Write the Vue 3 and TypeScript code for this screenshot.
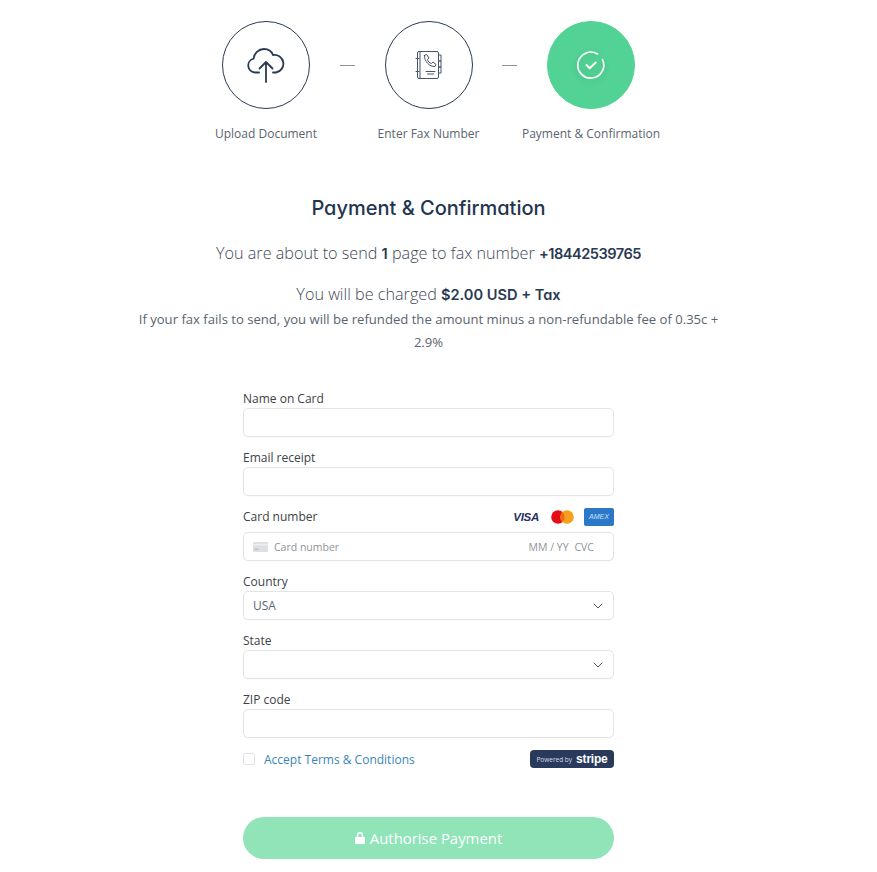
<script setup lang="ts">
type Step = { id: string; label: string; active?: boolean }

const steps: Step[] = [
  { id: 'upload', label: 'Upload Document' },
  { id: 'fax', label: 'Enter Fax Number' },
  { id: 'pay', label: 'Payment & Confirmation', active: true },
]
</script>

<template>
  <main class="page">
    <section class="steps">
      <div v-for="(s, i) in steps" :key="s.id" class="step">
        <div class="circle" :class="{ active: s.active }">
          <svg v-if="s.id === 'upload'" width="38" height="36" viewBox="0 0 38 36" fill="none" stroke="#2a3a52" stroke-width="1.8" stroke-linecap="round" stroke-linejoin="round">
            <path d="M12 25.500H8a7 7 0 0 1-1.400-13.800A10.500 10.500 0 0 1 17 2c4.200 0 7.600 2.400 9 6a8.800 8.800 0 0 1 3 17.500h-3" />
            <path d="M19 35V15M12.500 21.500l6.500-6.500 6.500 6.500" />
          </svg>
          <svg v-else-if="s.id === 'fax'" width="28" height="30" viewBox="0 0 28 30" fill="none" stroke="#46556a" stroke-width="1" stroke-linecap="round" stroke-linejoin="round">
            <rect x="2.500" y="1.500" width="21" height="27" rx="1.500" />
            <path d="M5 1.500v27M1 8.500h3M1 21.500h3" />
            <path d="M23.500 5h2.500v6h-2.500M23.500 11h2.500v6h-2.500M23.500 17h2.500v6h-2.500" />
            <path d="M9.500 5.500l2-1 2.500 3.500-1.500 1.500c.5 2 2 3.500 4 4l1.500-1.500 3 2.500-1 2c-5.500.5-11-5.500-10.500-11z" />
            <path d="M11 21.500h9M12.500 24h6" />
          </svg>
          <svg v-else width="30" height="30" viewBox="0 0 30 30" fill="none" stroke="#fff" stroke-linecap="round" stroke-linejoin="round" class="done">
            <path d="M26.500 9.500a13 13 0 1 1-5-5.500" stroke-width="1.600" />
            <path d="M10.500 15l3.200 3.200 6-5.700" stroke-width="2" />
          </svg>
        </div>
        <span class="step-label">{{ s.label }}</span>
        <i v-if="i < steps.length - 1" class="dash" />
      </div>
    </section>

    <h1 class="title">Payment &amp; Confirmation</h1>
    <p class="line first">You are about to send <b>1</b> page to fax number <b class="phone">+18442539765</b></p>
    <p class="line second">You will be charged <b>$2.00 USD + Tax</b></p>
    <p class="note">If your fax fails to send, you will be refunded the amount minus a non-refundable fee of 0.35c + 2.9%</p>

    <form class="form" @submit.prevent>
      <div class="field">
        <label>Name on Card</label>
        <div class="box"></div>
      </div>
      <div class="field">
        <label>Email receipt</label>
        <div class="box"></div>
      </div>
      <div class="field card-field">
        <div class="card-head">
          <label>Card number</label>
          <div class="brands">
            <span class="visa">VISA</span>
            <svg class="mc" width="23" height="14" viewBox="0 0 23 14">
              <circle cx="7" cy="7" r="6.800" fill="#e30d17" />
              <circle cx="16" cy="7" r="6.800" fill="#f69e1e" />
              <path d="M11.500 2a6.800 6.800 0 0 1 0 10 6.800 6.800 0 0 1 0-10z" fill="#f26a10" />
            </svg>
            <span class="amex">AMEX</span>
          </div>
        </div>
        <div class="box card-box">
          <svg width="15" height="10" viewBox="0 0 15 10">
            <rect width="15" height="10" rx="1" fill="#dcdfe3" />
            <rect y="2" width="15" height="1.500" fill="#eceef0" />
            <rect x="1.500" y="6.500" width="4" height="1.500" fill="#bfc3c8" />
          </svg>
          <span class="ph grow">Card number</span>
          <span class="ph">MM / YY</span>
          <span class="ph">CVC</span>
        </div>
      </div>
      <div class="field">
        <label>Country</label>
        <div class="box select">
          <span>USA</span>
          <svg width="10" height="6" viewBox="0 0 10 6" fill="none" stroke="#4a545e" stroke-width="1" stroke-linecap="round" stroke-linejoin="round"><path d="M1 1l4 4 4-4" /></svg>
        </div>
      </div>
      <div class="field">
        <label>State</label>
        <div class="box select">
          <span></span>
          <svg width="10" height="6" viewBox="0 0 10 6" fill="none" stroke="#4a545e" stroke-width="1" stroke-linecap="round" stroke-linejoin="round"><path d="M1 1l4 4 4-4" /></svg>
        </div>
      </div>
      <div class="field">
        <label>ZIP code</label>
        <div class="box"></div>
      </div>

      <div class="terms">
        <span class="check"></span>
        <a class="terms-link">Accept Terms &amp; Conditions</a>
        <span class="stripe"><small>Powered by</small><b>stripe</b></span>
      </div>

      <button class="pay" type="button" disabled>
        <svg width="10" height="12" viewBox="0 0 10 12" fill="#fff">
          <path d="M1 5h.8V3.300a3.200 3.200 0 0 1 6.400 0V5H9a1 1 0 0 1 1 1v5a1 1 0 0 1-1 1H1a1 1 0 0 1-1-1V6a1 1 0 0 1 1-1zm2.200 0h3.600V3.300a1.800 1.800 0 0 0-3.600 0V5z" />
        </svg>
        Authorise Payment
      </button>
    </form>
  </main>
</template>

<style>
html,
body {
  margin: 0;
  background: #fff;
}
</style>

<style scoped>
.page {
  width: 857px;
  height: 872px;
  overflow: hidden;
  display: flex;
  flex-direction: column;
  align-items: center;
  font-family: 'Open Sans', 'Liberation Sans', sans-serif;
  color: #3d4a5c;
  box-sizing: border-box;
  padding-top: 21px;
}

.steps {
  display: flex;
  justify-content: center;
}

.step {
  position: relative;
  width: 162.5px;
  display: flex;
  flex-direction: column;
  align-items: center;
}

.circle {
  width: 86px;
  height: 86px;
  border: 1px solid #2a3a52;
  border-radius: 50%;
  display: grid;
  place-items: center;
}

.circle.active {
  background: #52d295;
  border-color: #52d295;
}

.done {
  filter: drop-shadow(0 2px 3px rgba(0, 0, 0, 0.12));
}

.step-label {
  margin-top: 17px;
  font-size: 12px;
  line-height: 16px;
  color: #5a6470;
  white-space: nowrap;
}

.dash {
  position: absolute;
  top: 44px;
  left: 155px;
  width: 15px;
  height: 1px;
  background: #8a929c;
}

.title {
  margin: 53px 0 0;
  font-family: Inter, 'Noto Sans', sans-serif;
  font-feature-settings: 'cv11';
  font-size: 20px;
  line-height: 26px;
  font-weight: 500;
  color: #22354f;
}

.line {
  margin: 0;
  font-size: 16.200px;
  font-weight: 300;
  line-height: 22px;
  color: #3d4856;
}

.line b {
  font-family: Inter, 'Noto Sans', sans-serif;
  font-feature-settings: 'cv11';
  font-size: 14.600px;
  font-weight: 600;
  color: #2a3a52;
}

.line .phone {
  letter-spacing: -0.5px;
}

.first {
  margin-top: 21px;
}

.second {
  margin-top: 18px;
}

.note {
  margin: 2px 0 0;
  width: 600px;
  font-size: 13.100px;
  line-height: 23px;
  text-align: center;
  color: #5a6470;
}

.form {
  width: 371px;
  margin-top: 36px;
  display: flex;
  flex-direction: column;
  gap: 12px;
}

.field {
  display: flex;
  flex-direction: column;
}

label {
  font-size: 12px;
  line-height: 18px;
  color: #3c4248;
}

.box {
  height: 29px;
  box-sizing: border-box;
  border: 1px solid #e1e4e8;
  border-radius: 5px;
  background: #fff;
  box-shadow: 0 1px 1px rgba(0, 0, 0, 0.02);
}

.card-head {
  display: flex;
  justify-content: space-between;
  align-items: center;
  height: 18px;
  margin-bottom: 6px;
}

.brands {
  display: flex;
  align-items: center;
}

.visa {
  font-family: 'Liberation Sans', sans-serif;
  font-size: 11.500px;
  font-weight: 700;
  font-style: italic;
  letter-spacing: -0.3px;
  color: #252f66;
}

.mc {
  margin-left: 12px;
}

.amex {
  margin-left: 10px;
  width: 30px;
  height: 18px;
  border-radius: 2px;
  background: #2b78c9;
  color: #cfe3f7;
  font-family: 'Liberation Sans', sans-serif;
  font-size: 7px;
  font-style: italic;
  line-height: 18px;
  text-align: center;
}

.card-box {
  display: flex;
  align-items: center;
  gap: 6px;
  padding: 0 19px 0 9px;
  font-size: 10.500px;
}

.ph {
  color: #909398;
}

.grow {
  flex: 1;
}

.select {
  display: flex;
  align-items: center;
  justify-content: space-between;
  padding: 0 10px 0 9px;
  font-size: 12px;
  color: #5a6470;
}

.terms {
  display: flex;
  align-items: center;
  height: 18px;
}

.check {
  width: 10px;
  height: 10px;
  border: 1px solid #dfe2e6;
  border-radius: 2px;
}

.terms-link {
  margin-left: 9px;
  flex: 1;
  font-size: 12px;
  color: #3a86b4;
}

.stripe {
  width: 84px;
  height: 18px;
  border-radius: 4px;
  background: #2a3a5c;
  color: #fff;
  display: flex;
  align-items: center;
  justify-content: center;
  gap: 4px;
}

.stripe small {
  font-size: 6.500px;
  color: #d5dbe6;
}

.stripe b {
  font-family: 'Liberation Sans', sans-serif;
  font-size: 12px;
  letter-spacing: -0.2px;
}

.pay {
  margin-top: 37px;
  height: 42px;
  flex: none;
  border: 0;
  border-radius: 21px;
  background: #90e4b8;
  color: #fff;
  font-family: inherit;
  font-size: 14.900px;
  font-weight: 500;
  display: flex;
  align-items: center;
  justify-content: center;
  gap: 5px;
}
</style>
